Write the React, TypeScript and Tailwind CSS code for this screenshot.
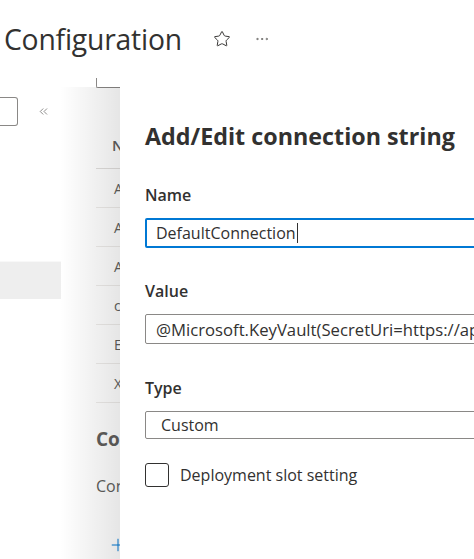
import { Star, MoreHorizontal, ChevronsLeft, Plus } from "lucide-react";

const rowLetters = ["A", "A", "A", "c", "E", "X"];

export default function App() {
  return (
    <div
      className="relative h-[559px] w-[474px] overflow-hidden bg-white text-[#323130]"
      style={{ fontFamily: '"Open Sans", "Noto Sans", sans-serif' }}
    >
      {/* page header */}
      <div className="flex h-[78px] items-center pl-[4px]">
        <h1 className="text-[28.3px] leading-none tracking-[-0.2px]">Configuration</h1>
        <Star size={18} strokeWidth={1.3} className="ml-[31px]" />
        <MoreHorizontal size={16} strokeWidth={1.2} className="ml-[23px] text-[#605e5c]" />
      </div>

      {/* page body behind the blade */}
      <div className="flex">
        <div className="w-[62px] shrink-0">
          <div className="mt-[19px] flex items-center">
            <div className="h-[29px] w-[18px] rounded-r-[3px] border border-l-0 border-[#8a8886]" />
            <ChevronsLeft size={13} strokeWidth={1.3} className="ml-[19px] text-[#605e5c]" />
          </div>
          <div className="mt-[135px] h-[38px] w-[61px] border-t border-t-[#f8f8f8] bg-[#eeeeee]" />
        </div>
        <div className="ml-[34px] w-[26px] shrink-0 overflow-hidden whitespace-nowrap">
          <div className="h-[10px] w-[30px] rounded-bl-[2px] border-b border-l border-[#8a8886]" />
          <div className="mt-[50px] pl-[16px] text-[15px] font-semibold leading-none text-[#605e5c]">N</div>
          <div className="mt-[15px] border-b border-[#e1dfdd]" />
          {rowLetters.map((l, i) => (
            <div key={i} className="flex h-[39px] items-center border-b border-[#edebe9] pl-[18px] text-[14px] text-[#605e5c]">
              {l}
            </div>
          ))}
          <div className="mt-[27px] text-[19px] font-bold leading-none text-[#605e5c]">Co</div>
          <div className="mt-[29px] text-[16px] leading-none text-[#605e5c]">Con</div>
          <Plus size={20} strokeWidth={1.2} className="ml-[12px] mt-[41px] text-[#0078d4]" />
        </div>
      </div>

      {/* blade shadow */}
      <div className="absolute bottom-0 left-[60px] top-[87px] w-[60px] bg-linear-to-r from-transparent to-black/[0.1]" />

      {/* blade */}
      <div className="absolute bottom-0 left-[120px] right-0 top-[87px] bg-white pl-[25px]">
        <h2 className="mt-[38px] whitespace-nowrap text-[23.3px] font-bold leading-none">Add/Edit connection string</h2>

        <label className="mt-[39px] block text-[16px] font-semibold leading-none">Name</label>
        <div className="mt-[15px] flex h-[30px] w-[340px] items-center rounded-[2px] border-2 border-[#0078d4] pl-[9px] text-[16px]">
          <span>DefaultConnection</span>
          <span className="ml-[1px] h-[20px] w-px bg-[#323130]" />
        </div>

        <label className="mt-[35px] block text-[16px] font-semibold leading-none">Value</label>
        <div className="mt-[15px] flex h-[30px] w-[340px] items-center overflow-hidden whitespace-nowrap rounded-[2px] border border-[#8a8886] pl-[10px] text-[16.7px]">
          @Microsoft.KeyVault(SecretUri=https://app-kv.vault.azure.net/secrets/db)
        </div>

        <label className="mt-[36px] block text-[16px] font-semibold leading-none">Type</label>
        <div className="mt-[15px] flex h-[28px] w-[340px] items-center rounded-[2px] border border-[#8a8886] pl-[15px] text-[16px]">
          Custom
        </div>

        <label className="mt-[24px] flex items-center">
          <span className="h-[24px] w-[24px] rounded-[3px] border border-[#323130]" />
          <span className="ml-[11px] text-[16px]">Deployment slot setting</span>
        </label>
      </div>
    </div>
  );
}
